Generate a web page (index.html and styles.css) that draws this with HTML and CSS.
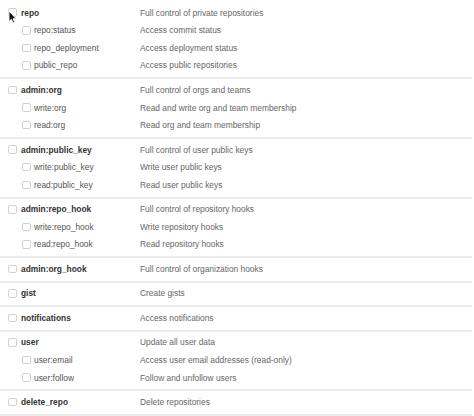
FILE: index.html
```html
<!DOCTYPE html>
<html lang="en">
<head>
  <meta charset="UTF-8" />
  <title>Scopes</title>
  <link rel="stylesheet" href="styles.css">
</head>
<body>
  <div class="scopes">
    <div class="scope">
      <div class="row main">
        <label class="name"><span class="cb"></span>repo</label>
        <span class="desc">Full control of private repositories</span>
      </div>
      <div class="row sub">
        <label class="name"><span class="cb"></span>repo:status</label>
        <span class="desc">Access commit status</span>
      </div>
      <div class="row sub">
        <label class="name"><span class="cb"></span>repo_deployment</label>
        <span class="desc">Access deployment status</span>
      </div>
      <div class="row sub">
        <label class="name"><span class="cb"></span>public_repo</label>
        <span class="desc">Access public repositories</span>
      </div>
      <svg class="cursor" width="9" height="14" viewBox="0 0 9 14">
        <path d="M1 1 L1 11.5 L3.4 9.3 L5 13 L6.6 12.3 L5.1 8.7 L8.2 8.7 Z" fill="#111" stroke="#fff" stroke-width="0.9" stroke-linejoin="round"/>
      </svg>
    </div>

    <div class="scope">
      <div class="row main">
        <label class="name"><span class="cb"></span>admin:org</label>
        <span class="desc">Full control of orgs and teams</span>
      </div>
      <div class="row sub">
        <label class="name"><span class="cb"></span>write:org</label>
        <span class="desc">Read and write org and team membership</span>
      </div>
      <div class="row sub">
        <label class="name"><span class="cb"></span>read:org</label>
        <span class="desc">Read org and team membership</span>
      </div>
    </div>

    <div class="scope">
      <div class="row main">
        <label class="name"><span class="cb"></span>admin:public_key</label>
        <span class="desc">Full control of user public keys</span>
      </div>
      <div class="row sub">
        <label class="name"><span class="cb"></span>write:public_key</label>
        <span class="desc">Write user public keys</span>
      </div>
      <div class="row sub">
        <label class="name"><span class="cb"></span>read:public_key</label>
        <span class="desc">Read user public keys</span>
      </div>
    </div>

    <div class="scope">
      <div class="row main">
        <label class="name"><span class="cb"></span>admin:repo_hook</label>
        <span class="desc">Full control of repository hooks</span>
      </div>
      <div class="row sub">
        <label class="name"><span class="cb"></span>write:repo_hook</label>
        <span class="desc">Write repository hooks</span>
      </div>
      <div class="row sub">
        <label class="name"><span class="cb"></span>read:repo_hook</label>
        <span class="desc">Read repository hooks</span>
      </div>
    </div>

    <div class="scope">
      <div class="row main">
        <label class="name"><span class="cb"></span>admin:org_hook</label>
        <span class="desc">Full control of organization hooks</span>
      </div>
    </div>

    <div class="scope">
      <div class="row main">
        <label class="name"><span class="cb"></span>gist</label>
        <span class="desc">Create gists</span>
      </div>
    </div>

    <div class="scope">
      <div class="row main">
        <label class="name"><span class="cb"></span>notifications</label>
        <span class="desc">Access notifications</span>
      </div>
    </div>

    <div class="scope">
      <div class="row main">
        <label class="name"><span class="cb"></span>user</label>
        <span class="desc">Update all user data</span>
      </div>
      <div class="row sub">
        <label class="name"><span class="cb"></span>user:email</label>
        <span class="desc">Access user email addresses (read-only)</span>
      </div>
      <div class="row sub">
        <label class="name"><span class="cb"></span>user:follow</label>
        <span class="desc">Follow and unfollow users</span>
      </div>
    </div>

    <div class="scope">
      <div class="row main">
        <label class="name"><span class="cb"></span>delete_repo</label>
        <span class="desc">Delete repositories</span>
      </div>
    </div>
  </div>
</body>
</html>
```

FILE: styles.css
```css
body {
  margin: 0;
  background: #fff;
  font-family: 'Liberation Sans', Arial, Helvetica, sans-serif;
  font-size: 8.4px;
  color: #333;
}
.scopes {
  width: 472px;
  padding-top: 2px;
}
.scope {
  position: relative;
  padding: 1.9px 0 3px;
  border-bottom: 2px solid #ececec;
}
.row {
  display: grid;
  grid-template-columns: 140px 1fr;
  align-items: center;
  height: 17.6px;
}
.name {
  display: flex;
  align-items: center;
  white-space: nowrap;
}
.main .name {
  padding-left: 8px;
  font-weight: bold;
  color: #333;
}
.sub .name {
  padding-left: 22px;
  color: #555;
}
.cb {
  box-sizing: border-box;
  width: 8.5px;
  height: 8.5px;
  margin-right: 4.5px;
  border: 1px solid #d2d2d2;
  border-radius: 2px;
  background: #fff;
}
.sub .cb {
  margin-right: 3.5px;
}
.desc {
  color: #666;
  white-space: nowrap;
}
.cursor {
  position: absolute;
  left: 8px;
  top: 8px;
}
```
